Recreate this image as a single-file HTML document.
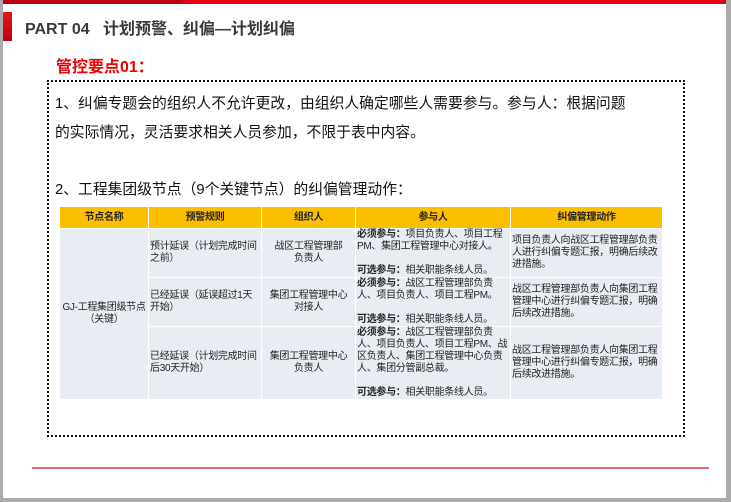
<!DOCTYPE html>
<html><head><meta charset="utf-8"><style>
*{margin:0;padding:0;box-sizing:border-box}
body{width:731px;height:502px;overflow:hidden;background:#a9abad;font-family:"Liberation Sans","Noto Sans CJK SC",sans-serif;position:relative}
#pg{position:absolute;left:3px;top:0;width:723px;height:498px;background:#fff}
.abs{position:absolute}
table{border-collapse:collapse;position:absolute;left:56px;top:206px;width:604px;font-size:10px;line-height:12px;color:#222;letter-spacing:-0.3px}
td,th{border:1.5px solid #fff;background:#e8ecf3;vertical-align:middle;padding:0 1px}
th{background:#fcbf00;height:22px;font-weight:bold;font-size:10px}
</style></head><body>
<div id="pg">
<div class="abs" style="left:0;top:0;width:723px;height:4px;background:#e60012"></div>
<div class="abs" style="left:0;top:0;width:180px;height:4px;background:#c00010"></div>
<div class="abs" style="left:0;top:12px;width:9px;height:29px;background:linear-gradient(#e8141c,#c00010)"></div>
<div class="abs" style="left:22px;top:15px;font-size:16px;font-weight:bold;color:#3a3a3a;white-space:nowrap">PART 04&nbsp;&nbsp;&nbsp;计划预警、纠偏—计划纠偏</div>
<div class="abs" style="left:53px;top:53px;font-size:16px;font-weight:bold;color:#f00000">管控要点01：</div>
<div class="abs" style="left:44px;top:80px;width:638px;height:357px;border:2.5px dotted #111"></div>
<div class="abs" style="left:52px;top:90px;width:625px;font-size:14.8px;line-height:28.5px;color:#111;white-space:nowrap">1、纠偏专题会的组织人不允许更改，由组织人确定哪些人需要参与。参与人：根据问题<br>的实际情况，灵活要求相关人员参加，不限于表中内容。<br><br>2、工程集团级节点（9个关键节点）的纠偏管理动作：</div>
<table>
<tr><th style="width:89px">节点名称</th><th style="width:113px">预警规则</th><th style="width:94px">组织人</th><th style="width:155px">参与人</th><th>纠偏管理动作</th></tr>
<tr style="height:49px"><td rowspan="3" style="text-align:center">GJ-工程集团级节点<br>（关键）</td><td>预计延误（计划完成时间之前）</td><td style="text-align:center">战区工程管理部<br>负责人</td><td><b>必须参与：</b>项目负责人、项目工程PM、集团工程管理中心对接人。<br><br><b>可选参与：</b>相关职能条线人员。</td><td>项目负责人向战区工程管理部负责人进行纠偏专题汇报，明确后续改进措施。</td></tr>
<tr style="height:49px"><td>已经延误（延误超过1天开始）</td><td style="text-align:center">集团工程管理中心<br>对接人</td><td><b>必须参与：</b>战区工程管理部负责人、项目负责人、项目工程PM。<br><br><b>可选参与：</b>相关职能条线人员。</td><td>战区工程管理部负责人向集团工程管理中心进行纠偏专题汇报，明确后续改进措施。</td></tr>
<tr style="height:72px"><td>已经延误（计划完成时间后30天开始）</td><td style="text-align:center">集团工程管理中心<br>负责人</td><td><b>必须参与：</b>战区工程管理部负责人、项目负责人、项目工程PM、战区负责人、集团工程管理中心负责人、集团分管副总裁。<br><br><b>可选参与：</b>相关职能条线人员。</td><td>战区工程管理部负责人向集团工程管理中心进行纠偏专题汇报，明确后续改进措施。</td></tr>
</table>
<div class="abs" style="left:29px;top:467px;width:677px;height:2px;background:#ea6a74"></div>
</div>
</body></html>
